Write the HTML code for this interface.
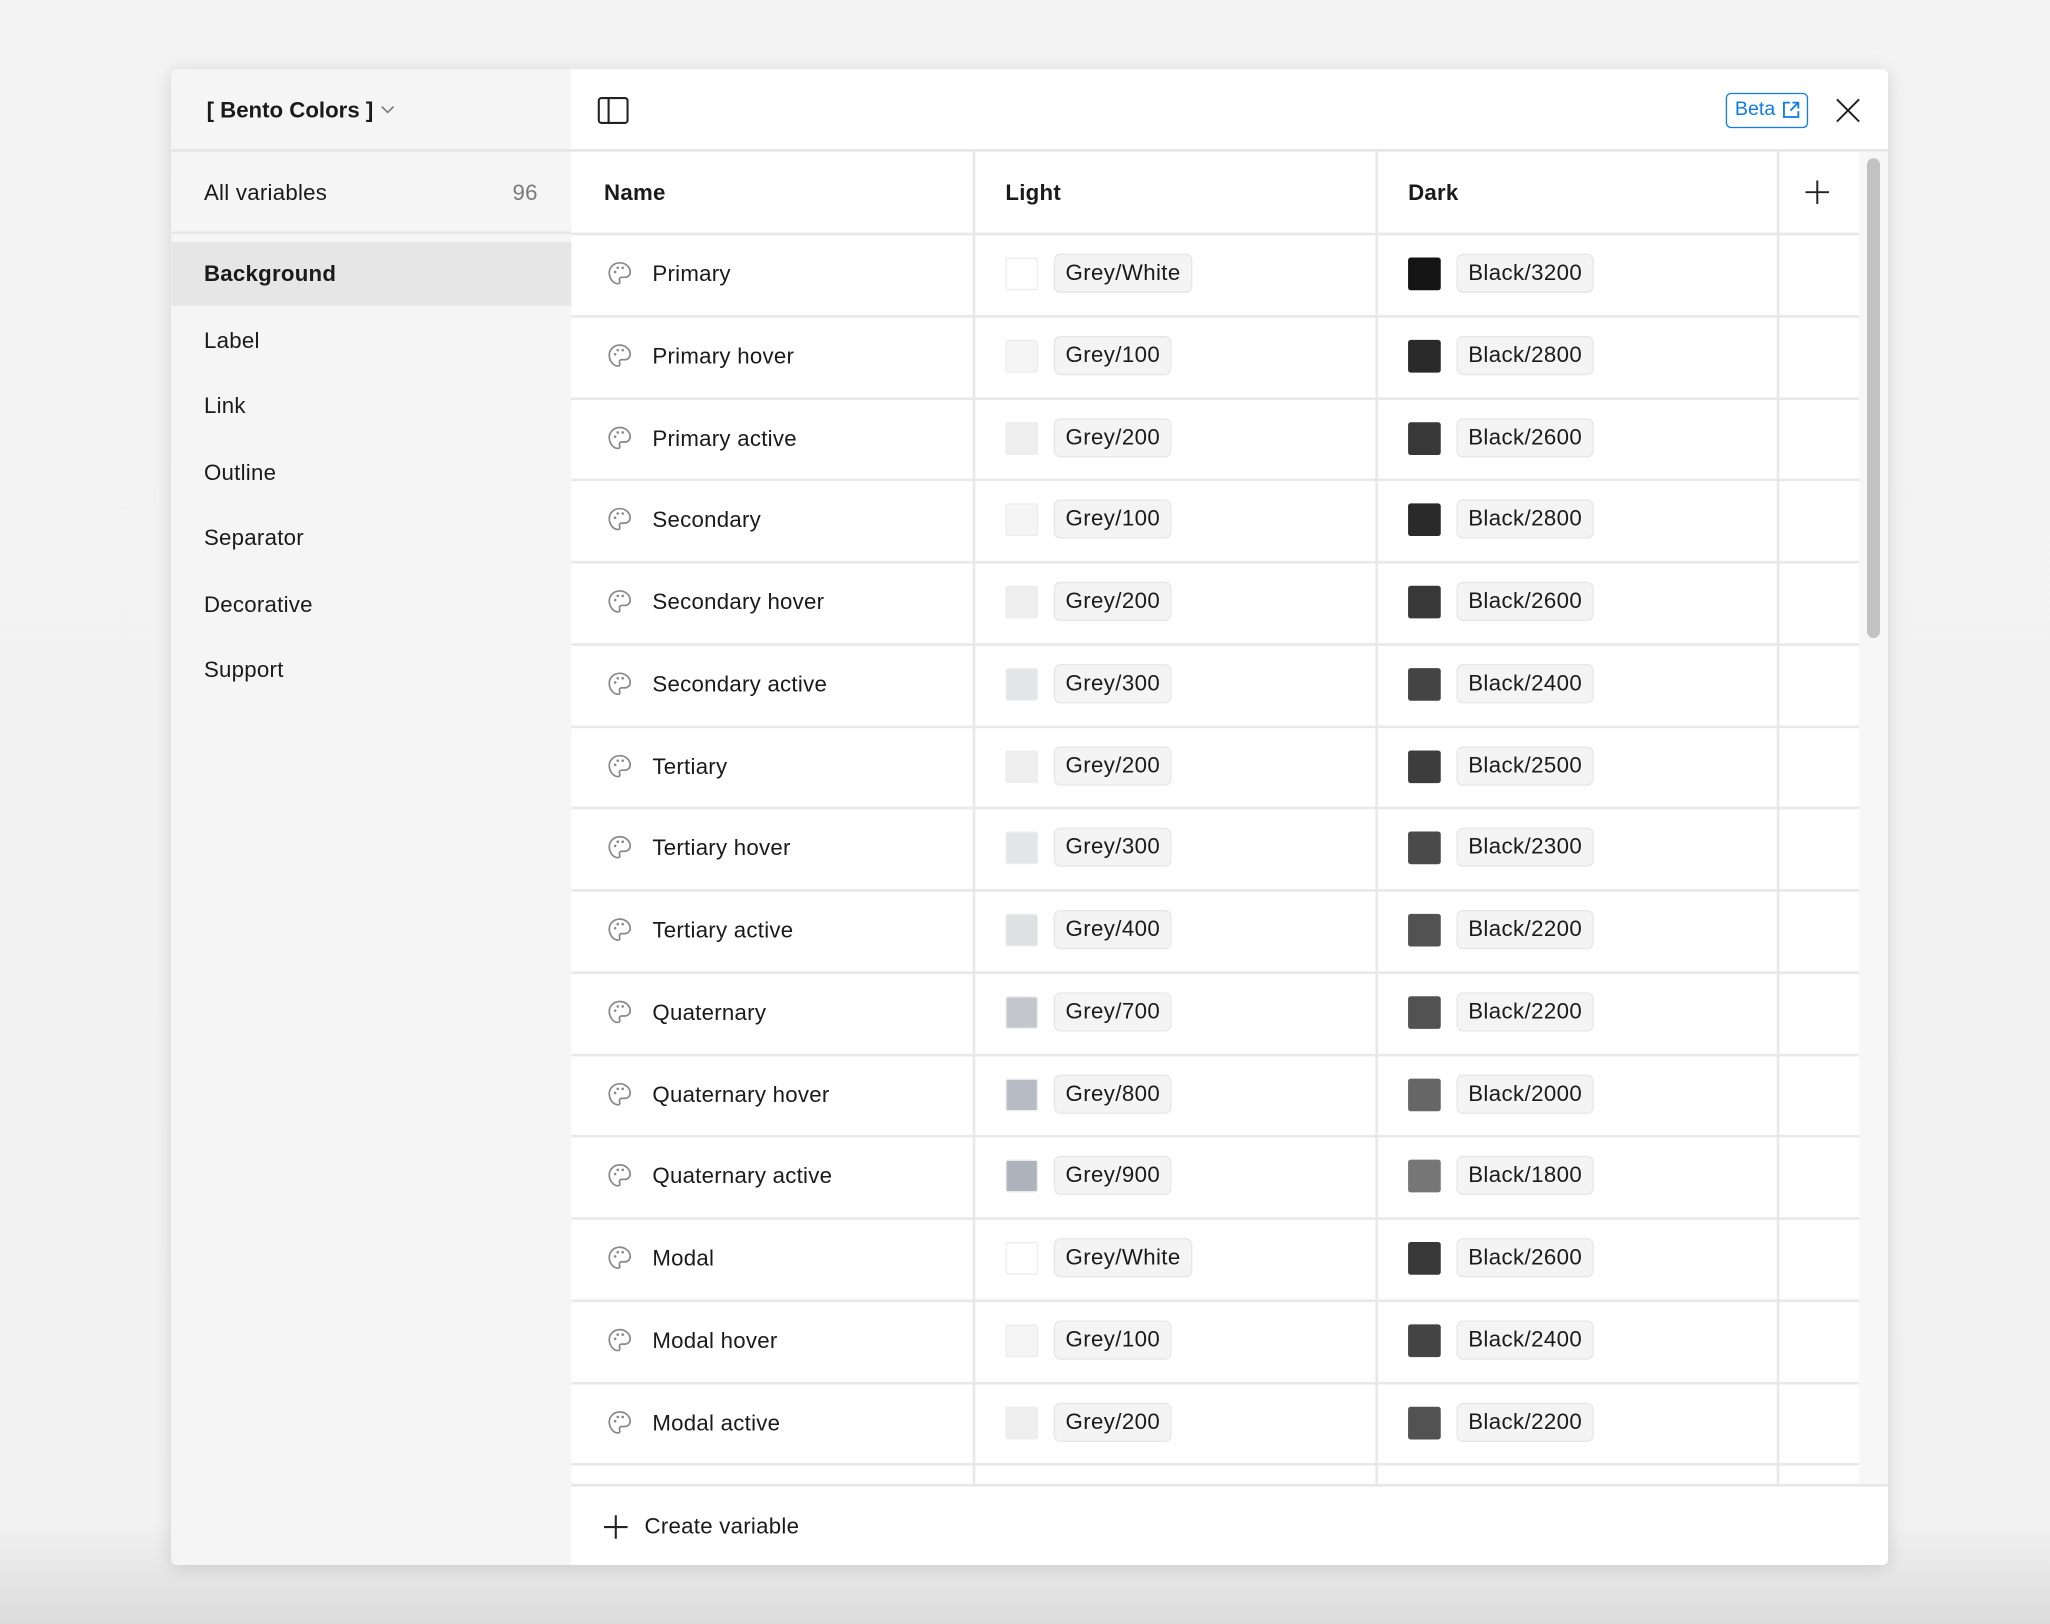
<!DOCTYPE html>
<html><head><meta charset="utf-8"><style>
*{box-sizing:border-box;margin:0;padding:0}
html,body{width:2050px;height:1624px;overflow:hidden}
body{background:linear-gradient(#f3f3f3 0,#f2f2f2 1520px,#dcdcdc 1624px);font-family:"Liberation Sans",Arial,sans-serif;color:#1a1a1a}
#w{position:absolute;left:0;top:0;width:1568px;height:1242px;transform:scale(1.30740);transform-origin:0 0}
.modal{position:absolute;left:131px;top:53px;width:1313px;height:1144px;background:#fff;border-radius:4px;box-shadow:0 2px 14px rgba(0,0,0,.13);overflow:hidden}
.side{position:absolute;left:0;top:0;width:306px;height:100%;background:#f5f5f5}
.a{position:absolute;white-space:nowrap}
.hl{position:absolute;background:#e6e6e6}
.t{font-size:17px;letter-spacing:.2px}
.chip{position:absolute;height:30px;background:#f4f4f4;border:1px solid #e6e6e6;border-radius:5px;font-size:17px;line-height:28px;padding:0 8px;white-space:nowrap;letter-spacing:.3px}
.sw{position:absolute;width:25px;height:25px;border-radius:2px}
</style></head><body><div id="w">
<div class="modal">
 <div class="side">
  <div class="a" style="left:27px;top:22px;font-size:17px;font-weight:bold">[ Bento Colors ]</div>
  <svg class="a" style="left:160px;top:27px" width="11" height="8" viewBox="0 0 11 8"><path d="M1 1.5l4.5 4.5 4.5-4.5" fill="none" stroke="#777" stroke-width="1.2"/></svg>
  <div class="hl" style="left:0;top:61px;width:306px;height:2px"></div>
  <div class="a t" style="left:25px;top:85px">All variables</div>
  <div class="a t" style="left:261px;top:85px;color:#7a7a7a">96</div>
  <div class="hl" style="left:0;top:124px;width:306px;height:2px"></div>
  <div class="hl" style="left:0;top:132px;width:306px;height:49px"></div>
  <div class="a t" style="left:25px;top:147px;font-weight:bold">Background</div>
  <div class="a t" style="left:25px;top:198px">Label</div>
  <div class="a t" style="left:25px;top:248px">Link</div>
  <div class="a t" style="left:25px;top:299px">Outline</div>
  <div class="a t" style="left:25px;top:349px">Separator</div>
  <div class="a t" style="left:25px;top:400px">Decorative</div>
  <div class="a t" style="left:25px;top:450px">Support</div>
 </div>
 <svg class="a" style="left:326px;top:21px" width="24" height="21" viewBox="0 0 24 21"><rect x="1" y="1" width="22" height="19" rx="2" fill="none" stroke="#222" stroke-width="1.6"/><path d="M8.5 1v19" stroke="#222" stroke-width="1.6"/></svg>
 <div class="a" style="left:1189px;top:18px;width:63px;height:27px;border:1.5px solid #0d7ce8;border-radius:4px;color:#0d7ce8;font-size:15px;line-height:24px;padding-left:6px">Beta</div>
 <svg class="a" style="left:1232px;top:24px" width="14" height="14" viewBox="0 0 14 14"><path d="M6 1.5H1.5v11h11V8M8 1.5h4.5V6M12.5 1.5L6.5 7.5" fill="none" stroke="#0d7ce8" stroke-width="1.4"/></svg>
 <svg class="a" style="left:1273px;top:22px" width="19" height="19" viewBox="0 0 19 19"><path d="M1 1l17 17M18 1L1 18" stroke="#222" stroke-width="1.5"/></svg>
 <div class="hl" style="left:306px;top:61px;width:1007px;height:2px"></div>
 <div id="tbl"></div>
 <div class="hl" style="left:306px;top:1082px;width:1007px;height:2px"></div>
 <svg class="a" style="left:330px;top:1105px" width="20" height="20" viewBox="0 0 20 20"><path d="M10 1v18M1 10h18" stroke="#222" stroke-width="1.6"/></svg>
 <div class="a t" style="left:362px;top:1105px">Create variable</div>
 <div class="hl" style="left:1291px;top:63px;width:22px;height:1019px;background:#f7f7f7"></div>
 <div class="a" style="left:1297px;top:68px;width:10px;height:367px;background:#c2c2c2;border-radius:5px"></div>
</div>
</div>
<script>
var rows=[["Primary","Grey/White","#ffffff","Black/3200","#141414"],["Primary hover","Grey/100","#f5f5f5","Black/2800","#2a2a2a"],["Primary active","Grey/200","#eeeeee","Black/2600","#383838"],["Secondary","Grey/100","#f5f5f5","Black/2800","#2a2a2a"],["Secondary hover","Grey/200","#eeeeee","Black/2600","#383838"],["Secondary active","Grey/300","#e4e5e7","Black/2400","#444444"],["Tertiary","Grey/200","#eeeeee","Black/2500","#3d3d3d"],["Tertiary hover","Grey/300","#e4e5e7","Black/2300","#4a4a4a"],["Tertiary active","Grey/400","#dfe0e3","Black/2200","#525252"],["Quaternary","Grey/700","#c3c6cb","Black/2200","#525252"],["Quaternary hover","Grey/800","#b7bbc3","Black/2000","#666666"],["Quaternary active","Grey/900","#adb3bd","Black/1800","#777777"],["Modal","Grey/White","#ffffff","Black/2600","#383838"],["Modal hover","Grey/100","#f5f5f5","Black/2400","#444444"],["Modal active","Grey/200","#eeeeee","Black/2200","#525252"]];
var h='';
var X=function(v){return v-131},Y=function(v){return v-53};
h+='<div class="a t" style="left:'+X(462)+'px;top:'+Y(138)+'px;font-weight:bold">Name</div>';
h+='<div class="a t" style="left:'+X(769)+'px;top:'+Y(138)+'px;font-weight:bold">Light</div>';
h+='<div class="a t" style="left:'+X(1077)+'px;top:'+Y(138)+'px;font-weight:bold">Dark</div>';
h+='<svg class="a" style="left:'+X(1381)+'px;top:'+Y(138)+'px" width="18" height="18" viewBox="0 0 18 18"><path d="M9 0v18M0 9h18" stroke="#222" stroke-width="1.5"/></svg>';
[744,1052,1359].forEach(function(x){h+='<div class="hl" style="left:'+X(x)+'px;top:'+Y(116)+'px;width:2px;height:1019px;background:#e8e8e8"></div>'});
for(var i=0;i<=15;i++){var y=178+i*62.75;h+='<div class="hl" style="left:306px;top:'+Y(y)+'px;width:985px;height:2px;background:#e8e8e8"></div>';}
rows.forEach(function(r,i){var c=209+i*62.75;
h+='<svg class="a" style="left:'+X(464)+'px;top:'+Y(c-10)+'px" width="20" height="20" viewBox="0 0 20 20"><path d="M10 2C5.5 2 2 5.5 2 9.6c0 4.2 3 8.4 6.6 8.4 1.6 0 1.7-1.2 1.3-2.3-.5-1.3.2-2.6 1.6-2.6h2.3C16.3 13.1 18 11.3 18 9 18 5.2 14.4 2 10 2z" fill="none" stroke="#888" stroke-width="1.3"/><circle cx="6.5" cy="9" r="1" fill="#888"/><circle cx="8.5" cy="5.8" r="1" fill="#888"/><circle cx="12.3" cy="5.8" r="1" fill="#888"/></svg>';
h+='<div class="a t" style="left:'+X(499)+'px;top:'+Y(c-9)+'px">'+r[0]+'</div>';
h+='<div class="sw" style="left:'+X(769)+'px;top:'+Y(c-12)+'px;background:'+r[2]+';border:1px solid #ececec"></div>';
h+='<div class="chip" style="left:'+X(806)+'px;top:'+Y(c-15)+'px">'+r[1]+'</div>';
h+='<div class="sw" style="left:'+X(1077)+'px;top:'+Y(c-12)+'px;background:'+r[4]+'"></div>';
h+='<div class="chip" style="left:'+X(1114)+'px;top:'+Y(c-15)+'px">'+r[3]+'</div>';
});
document.getElementById('tbl').outerHTML=h;
</script>
</body></html>
